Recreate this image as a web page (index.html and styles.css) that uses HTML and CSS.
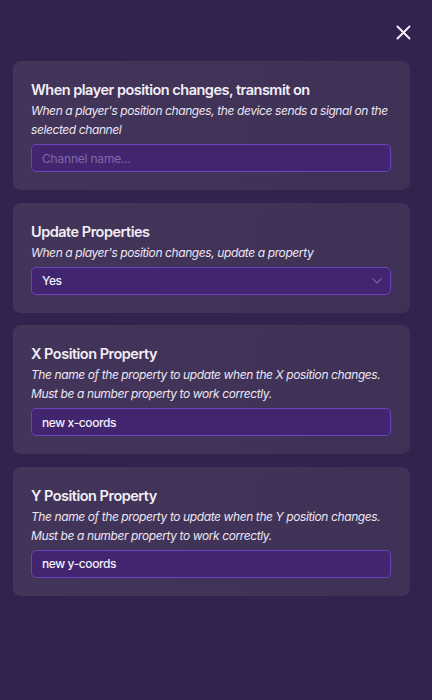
FILE: index.html
```html
<!DOCTYPE html>
<html lang="en">
<head>
<meta charset="utf-8">
<title>Player position settings</title>
<link rel="stylesheet" href="styles.css">
</head>
<body>
<div class="modal">
  <div class="topbar">
    <button class="close" aria-label="Close">
      <svg width="15" height="15" viewBox="0 0 15 15"><path d="M1.5 1.5 L13.5 13.5 M13.5 1.5 L1.5 13.5" stroke="#f2eff8" stroke-width="2" stroke-linecap="round" fill="none"/></svg>
    </button>
  </div>
  <div class="list">
    <section class="card">
      <h3 class="title">When player position changes, transmit on</h3>
      <p class="desc">When a player's position changes, the device sends a signal on the selected channel</p>
      <div class="field placeholder">Channel name...</div>
    </section>
    <section class="card">
      <h3 class="title">Update Properties</h3>
      <p class="desc">When a player's position changes, update a property</p>
      <div class="field select">
        <span>Yes</span>
        <svg class="chev" width="10" height="6" viewBox="0 0 10 6"><path d="M0.6 0.6 L5 5 L9.4 0.6" stroke="#7b62b0" stroke-width="1.2" fill="none"/></svg>
      </div>
    </section>
    <section class="card">
      <h3 class="title">X Position Property</h3>
      <p class="desc">The name of the property to update when the X position changes. Must be a number property to work correctly.</p>
      <div class="field">new x-coords</div>
    </section>
    <section class="card">
      <h3 class="title">Y Position Property</h3>
      <p class="desc">The name of the property to update when the Y position changes. Must be a number property to work correctly.</p>
      <div class="field">new y-coords</div>
    </section>
  </div>
</div>
</body>
</html>
```

FILE: styles.css
```css
html, body {
  margin: 0;
  padding: 0;
}
body {
  background: #33224e;
  font-family: Inter, "Noto Sans", "Liberation Sans", sans-serif;
  color: #f1eef6;
  width: 432px;
  height: 700px;
  overflow: hidden;
}
.modal {
  padding: 0 22px 0 13px;
}
.topbar {
  height: 61px;
  display: flex;
  justify-content: flex-end;
  align-items: flex-start;
}
.close {
  margin-top: 25px;
  margin-right: -1px;
  padding: 0;
  width: 15px;
  height: 15px;
  background: none;
  border: none;
  display: block;
}
.close svg { display: block; }
.list {
  display: flex;
  flex-direction: column;
  gap: 12.5px;
}
.card {
  background: linear-gradient(100deg, #433459 0%, #413257 60%, #3f3055 100%);
  border-radius: 8px;
  padding: 18px 19px 18px 18px;
}
.title {
  margin: 0;
  font-size: 14.5px;
  line-height: 22px;
  font-weight: 600;
  letter-spacing: -0.5px;
  color: #f1eef6;
}
.desc {
  margin: 0;
  font-size: 12px;
  line-height: 19px;
  font-style: italic;
  letter-spacing: -0.4px;
  color: #ebe6f2;
}
.field {
  margin-top: 5px;
  height: 28px;
  box-sizing: border-box;
  background: #42256f;
  border: 1px solid #6a43c0;
  border-radius: 5px;
  padding: 0 8px 0 10px;
  display: flex;
  align-items: center;
  font-size: 12px;
  font-weight: 500;
  letter-spacing: -0.4px;
  color: #f4f1fa;
}
.field.placeholder {
  color: #7f69a8;
  font-weight: 400;
  letter-spacing: -0.2px;
}
.field.select {
  justify-content: space-between;
}
.chev {
  display: block;
}
```
